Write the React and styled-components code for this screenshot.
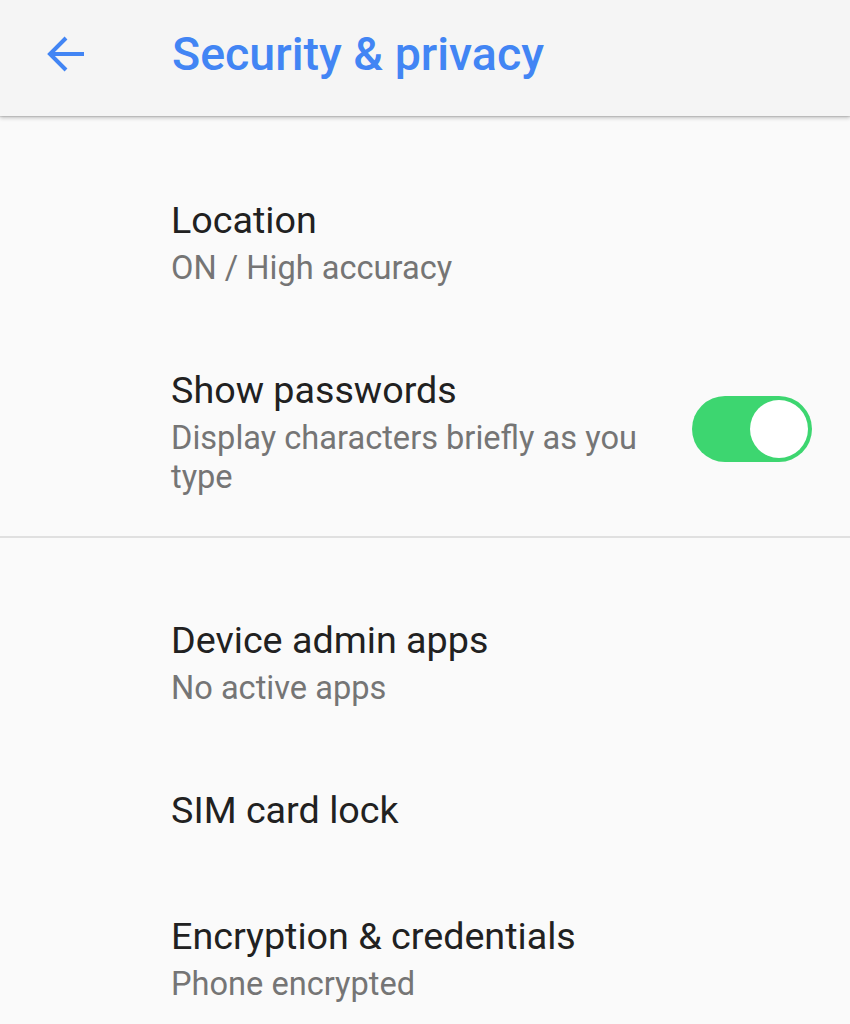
import React from 'react';
import styled, { createGlobalStyle } from 'styled-components';

const GlobalStyle = createGlobalStyle`
  html, body {
    margin: 0;
    padding: 0;
    background: #fafafa;
  }
  body {
    font-family: Roboto, "Noto Sans", sans-serif;
    -webkit-font-smoothing: antialiased;
  }
`;

const Page = styled.div`
  width: 850px;
  min-height: 1024px;
  background: #fafafa;
  overflow: hidden;
`;

const Toolbar = styled.header`
  height: 116px;
  background: #f5f5f5;
  display: flex;
  align-items: center;
  box-shadow: 0 2px 4px rgba(0, 0, 0, 0.22), 0 1px 1px rgba(0, 0, 0, 0.1);
  position: relative;
  z-index: 1;
`;

const BackButton = styled.div`
  width: 172px;
  height: 100%;
  display: flex;
  align-items: center;
  padding-left: 47px;
  box-sizing: border-box;
  padding-bottom: 8px;
`;

const Title = styled.h1`
  margin: 0;
  font-size: 46.5px;
  font-weight: 500;
  color: #4285f4;
  padding-bottom: 8px;
`;

const List = styled.div`
  padding-top: 41px;
`;

const Section = styled.section`
  border-top: ${p => (p.$divider ? '2px solid #e0e0e0' : 'none')};
  padding-top: ${p => (p.$divider ? '39px' : '0')};
`;

const Item = styled.div`
  display: flex;
  align-items: center;
  padding: 39px 38px 39px 171px;
`;

const Texts = styled.div`
  flex: 1;
  padding-right: 32px;
`;

const ItemTitle = styled.div`
  font-size: 37.7px;
  line-height: 48px;
  color: #212121;
`;

const ItemSummary = styled.div`
  font-size: 32.6px;
  line-height: 39px;
  color: #757575;
  margin-top: 5px;
`;

const Track = styled.div`
  width: 120px;
  height: 66px;
  border-radius: 33px;
  background: ${p => (p.$on ? '#3dd670' : '#bdbdbd')};
  display: flex;
  align-items: center;
  justify-content: ${p => (p.$on ? 'flex-end' : 'flex-start')};
  padding: 0 4px;
  box-sizing: border-box;
  flex-shrink: 0;
  margin-bottom: 6px;
`;

const Thumb = styled.div`
  width: 58px;
  height: 58px;
  border-radius: 50%;
  background: #ffffff;
`;

function BackArrow() {
  return (
    <svg width="38" height="36" viewBox="0 0 38 36" fill="none">
      <path
        d="M37 18H4M19 2L3 18l16 16"
        stroke="#4285f4"
        strokeWidth="4"
        strokeLinecap="butt"
        strokeLinejoin="miter"
      />
    </svg>
  );
}

function Toggle({ on }) {
  return (
    <Track $on={on}>
      <Thumb />
    </Track>
  );
}

function Pref({ title, summary, toggle }) {
  return (
    <Item>
      <Texts>
        <ItemTitle>{title}</ItemTitle>
        {summary && <ItemSummary>{summary}</ItemSummary>}
      </Texts>
      {toggle !== undefined && <Toggle on={toggle} />}
    </Item>
  );
}

export default function App() {
  return (
    <Page>
      <GlobalStyle />
      <Toolbar>
        <BackButton>
          <BackArrow />
        </BackButton>
        <Title>Security &amp; privacy</Title>
      </Toolbar>
      <List>
        <Section>
          <Pref title="Location" summary="ON / High accuracy" />
          <Pref
            title="Show passwords"
            summary="Display characters briefly as you type"
            toggle={true}
          />
        </Section>
        <Section $divider>
          <Pref title="Device admin apps" summary="No active apps" />
          <Pref title="SIM card lock" />
          <Pref title="Encryption &amp; credentials" summary="Phone encrypted" />
        </Section>
      </List>
    </Page>
  );
}
